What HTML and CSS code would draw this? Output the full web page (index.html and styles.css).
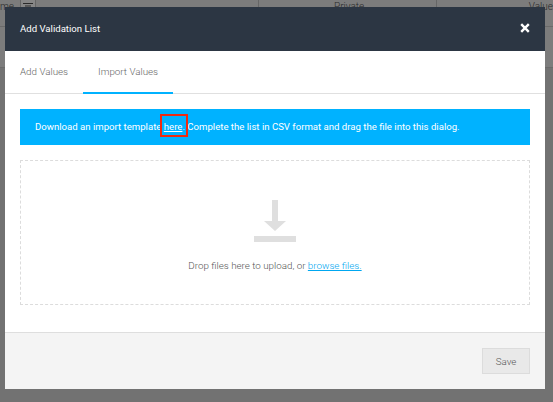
FILE: index.html
```html
<!DOCTYPE html>
<html lang="en">
<head>
    <meta charset="UTF-8">
    <title>Add Validation List</title>
    <link rel="stylesheet" href="styles.css">
</head>
<body>
    <div class="backdrop-table">
        <div class="bg-row bg-head">
            <div class="bg-cell bg-name"><span>me</span></div>
            <div class="bg-cell bg-menu">
                <svg width="10" height="6" viewBox="0 0 10 6"><path d="M0 .5h10M2 3h6M3 5.500h4" stroke="#2a2a2a" fill="none"/></svg>
            </div>
            <div class="bg-cell bg-wide"></div>
            <div class="bg-cell bg-private">Private</div>
            <div class="bg-cell bg-value">Value</div>
        </div>
        <div class="bg-row bg-body"></div>
    </div>

    <div class="modal">
        <div class="modal-header">
            <span class="modal-title">Add Validation List</span>
            <svg class="close-icon" width="10" height="10" viewBox="0 0 10 10"><path d="M1.200 1.200l7.600 7.600M8.800 1.200L1.200 8.800" stroke="#fff" stroke-width="2.400" fill="none"/></svg>
        </div>

        <div class="tabs">
            <div class="tab">Add Values</div>
            <div class="tab active">Import Values</div>
        </div>

        <div class="modal-body">
            <div class="banner">
                Download an import template <span class="here-wrap"><a class="banner-link">here</a>.</span> Complete the list in CSV format and drag the file into this dialog.
            </div>

            <div class="dropzone">
                <svg class="drop-icon" width="42" height="42" viewBox="0 0 42 42">
                    <path d="M18 0h6v21h8L21 31 10 21h8z" fill="#dfdfdf"/>
                    <rect y="36" width="42" height="6" fill="#dfdfdf"/>
                </svg>
                <div class="drop-text">Drop files here to upload, or <a class="browse-link">browse files.</a></div>
            </div>
        </div>

        <div class="modal-footer">
            <button class="save-btn">Save</button>
        </div>
    </div>
</body>
</html>
```

FILE: styles.css
```css
html, body {
    height: 100%;
}

body {
    margin: 0;
    background-color: #727272;
    font-family: Roboto, "Liberation Sans", sans-serif;
    font-size: 9.8px;
    font-weight: 300;
    overflow: hidden;
    position: relative;
}

.backdrop-table {
    background-color: #7c7c7c;
    color: #2a2a2a;
    font-size: 10px;
    line-height: 12px;
}

.bg-row {
    border-bottom: 1px solid #6a6a6a;
}

.bg-head {
    display: flex;
    height: 26px;
}

.bg-body {
    height: 40px;
}

.bg-cell {
    border-right: 1px solid #666;
    box-sizing: border-box;
    white-space: nowrap;
}

.bg-name {
    width: 21px;
    padding-top: 1px;
}

.bg-menu {
    width: 15px;
    padding-left: 2px;
    background-color: #868686;
}

.bg-menu svg {
    display: block;
    margin-top: 3px;
}

.bg-wide {
    width: 226px;
}

.bg-private {
    width: 179px;
    padding: 1px 0 0 75px;
}

.bg-value {
    flex: 1;
    border-right: none;
    padding: 1px 0 0 92px;
}

.modal {
    position: absolute;
    left: 5px;
    top: 7px;
    width: 540px;
    height: 382px;
    display: flex;
    flex-direction: column;
    background: white;
}

.modal-header {
    height: 44px;
    box-sizing: border-box;
    background-color: #2c3643;
    display: flex;
    align-items: center;
    justify-content: space-between;
    padding: 0 15px 2px;
}

.modal-title {
    color: white;
    font-size: 9.6px;
    font-weight: 400;
}

.tabs {
    display: flex;
    height: 42px;
    border-bottom: 1px solid #e0e0e0;
}

.tab {
    padding: 0 15px;
    line-height: 42px;
    color: #666;
    box-sizing: border-box;
    height: 43px;
}

.tab.active {
    border-bottom: 2px solid #00b2ff;
}

.modal-body {
    flex: 1;
    padding: 15px 15px 0;
}

.banner {
    height: 36px;
    line-height: 36px;
    background-color: #00b2ff;
    color: white;
    font-size: 9.6px;
    font-weight: 400;
    padding-left: 15px;
}

.here-wrap {
    position: relative;
}

.here-wrap::after {
    content: "";
    position: absolute;
    left: -4px;
    top: -7px;
    width: 24px;
    height: 19px;
    border: 2px solid #f02a10;
}

.banner a {
    color: white;
    text-decoration: underline;
}

.dropzone {
    margin-top: 15px;
    height: 145px;
    box-sizing: border-box;
    border: 1px dashed #dcdcdc;
    display: flex;
    flex-direction: column;
    align-items: center;
    padding-top: 39px;
}

.drop-text {
    margin-top: 18px;
    color: #555;
}

.browse-link {
    color: #00a7f0;
    text-decoration: underline;
}

.modal-footer {
    height: 57px;
    box-sizing: border-box;
    background-color: #f4f4f4;
    border-top: 1px solid #dedede;
    display: flex;
    justify-content: flex-end;
    align-items: center;
    padding: 0 15px;
}

.save-btn {
    width: 48px;
    height: 26px;
    background-color: #e9e9e9;
    border: 1px solid #dcdcdc;
    color: #555;
    font-family: inherit;
    font-size: inherit;
    font-weight: inherit;
}
```
